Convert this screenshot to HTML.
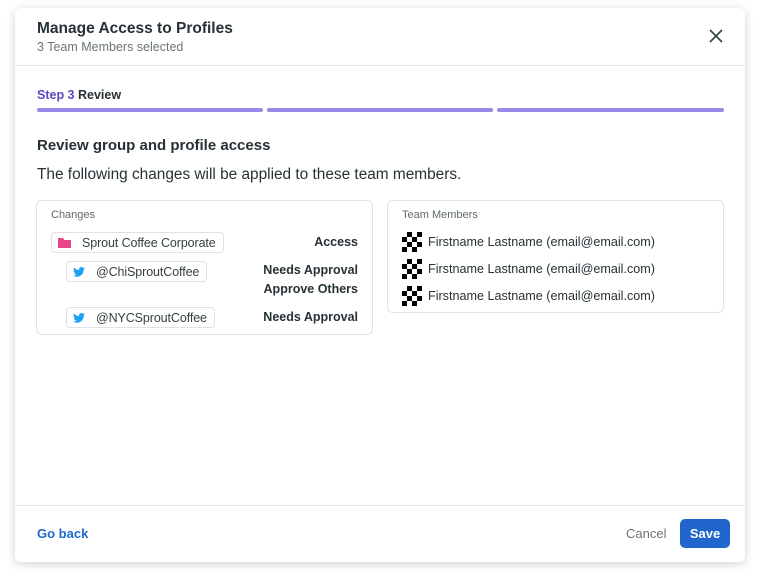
<!DOCTYPE html>
<html><head><meta charset="utf-8"><style>
*{box-sizing:border-box;margin:0;padding:0}
body{width:760px;height:585px;background:#fff;font-family:"Liberation Sans",sans-serif;color:#273236;position:relative;overflow:hidden}
.modal{position:absolute;left:15px;top:8px;width:730px;height:554px;background:#fff;border-radius:6px;box-shadow:0 2px 10px rgba(0,0,0,.18)}
.abs{position:absolute}
.t{font-size:16px;font-weight:bold;color:#273236}
.card{position:absolute;border:1px solid #dfe2e4;border-radius:6px;background:#fff}
.pill{position:absolute;border:1px solid #dfe2e4;border-radius:4px;height:21px;font-size:12.5px;color:#364141;padding:0 7px 0 6px;display:flex;align-items:center;white-space:nowrap;letter-spacing:-0.1px}
.r{position:absolute;right:14px;font-size:12.5px;font-weight:bold;color:#273236;text-align:right}
.bar{position:absolute;top:100px;height:4px;border-radius:2px;background:#9b87e6}
.mem{position:absolute;left:14px;font-size:12.6px;color:#273236;display:flex;align-items:center;gap:6px}
.av{width:20px;height:20px;background:conic-gradient(#000 25%,#fff 0 50%,#000 0 75%,#fff 0);background-size:10px 10px}
.lbl{position:absolute;left:14px;top:8px;font-size:11px;color:#5f6a6d}
</style></head><body>
<div class="modal">
<div class="abs t" style="left:22px;top:12px;font-size:15.5px">Manage Access to Profiles</div>
<div class="abs" style="left:22px;top:32px;font-size:12.5px;color:#6b7578">3 Team Members selected</div>
<svg class="abs" style="left:694px;top:21px" width="14" height="14"><path d="M1 1L13 13M13 1L1 13" stroke="#364141" stroke-width="1.6"/></svg>
<div class="abs" style="left:0;top:57px;width:730px;height:1px;background:#e4e6e8"></div>
<div class="abs" style="left:22px;top:80px;font-size:12.5px;font-weight:bold"><span style="color:#5b47c4">Step 3</span> Review</div>
<div class="bar" style="left:22px;width:226px"></div>
<div class="bar" style="left:252px;width:226px"></div>
<div class="bar" style="left:482px;width:227px"></div>
<div class="abs t" style="left:22px;top:129px;font-size:15px">Review group and profile access</div>
<div class="abs" style="left:22px;top:158px;font-size:15.4px;color:#273236">The following changes will be applied to these team members.</div>
<div class="card" style="left:21px;top:192px;width:337px;height:135px">
<div class="lbl">Changes</div>
<div class="pill" style="left:14px;top:31px"><svg width="13" height="11" style="margin-right:11px"><path d="M0 1h5l1.5 2H13v8H0z" fill="#e8458b"/></svg>Sprout Coffee Corporate</div>
<div class="r" style="top:34px">Access</div>
<div class="pill" style="left:29px;top:60px"><svg width="12" height="10" style="margin-right:11px" viewBox="0 0 24 20"><path d="M24 2.4c-.9.4-1.8.6-2.8.8 1-.6 1.8-1.6 2.2-2.7-1 .6-2 1-3.1 1.2A4.9 4.9 0 0 0 11.900 6C7.8 5.8 4.2 3.9 1.7.9c-1.3 2.3-.6 5.1 1.5 6.6-.8 0-1.6-.3-2.2-.6 0 2.4 1.7 4.4 3.9 4.9-.7.2-1.5.2-2.2.1.6 2 2.4 3.4 4.6 3.4A9.9 9.9 0 0 1 0 17.3 14 14 0 0 0 7.5 19.5c9.1 0 14.3-7.7 14-14.6 1-.7 1.8-1.6 2.5-2.5z" fill="#1da1f2"/></svg>@ChiSproutCoffee</div>
<div class="r" style="top:62px">Needs Approval</div>
<div class="r" style="top:81px">Approve Others</div>
<div class="pill" style="left:29px;top:106px"><svg width="12" height="10" style="margin-right:11px" viewBox="0 0 24 20"><path d="M24 2.4c-.9.4-1.8.6-2.8.8 1-.6 1.8-1.6 2.2-2.7-1 .6-2 1-3.1 1.2A4.9 4.9 0 0 0 11.9 6C7.8 5.8 4.2 3.9 1.7.9c-1.3 2.3-.6 5.1 1.5 6.6-.8 0-1.6-.3-2.2-.6 0 2.4 1.7 4.4 3.9 4.9-.7.2-1.5.2-2.2.1.6 2 2.4 3.4 4.6 3.4A9.9 9.9 0 0 1 0 17.3 14 14 0 0 0 7.5 19.5c9.1 0 14.3-7.7 14-14.6 1-.7 1.8-1.6 2.5-2.5z" fill="#1da1f2"/></svg>@NYCSproutCoffee</div>
<div class="r" style="top:109px">Needs Approval</div>
</div>
<div class="card" style="left:372px;top:192px;width:337px;height:113px">
<div class="lbl">Team Members</div>
<div class="mem" style="top:31px"><div class="av"></div>Firstname Lastname (email@email.com)</div>
<div class="mem" style="top:58px"><div class="av"></div>Firstname Lastname (email@email.com)</div>
<div class="mem" style="top:85px"><div class="av"></div>Firstname Lastname (email@email.com)</div>
</div>
<div class="abs" style="left:0;top:497px;width:730px;height:1px;background:#e4e6e8"></div>
<div class="abs" style="left:22px;top:518px;font-size:13px;font-weight:bold;color:#2069c9">Go back</div>
<div class="abs" style="left:611px;top:518px;font-size:13px;color:#6b7578">Cancel</div>
<div class="abs" style="left:665px;top:511px;width:50px;height:29px;background:#2066cc;border-radius:5px;color:#fff;font-size:13px;font-weight:bold;display:flex;align-items:center;justify-content:center">Save</div>
</div>
</body></html>
